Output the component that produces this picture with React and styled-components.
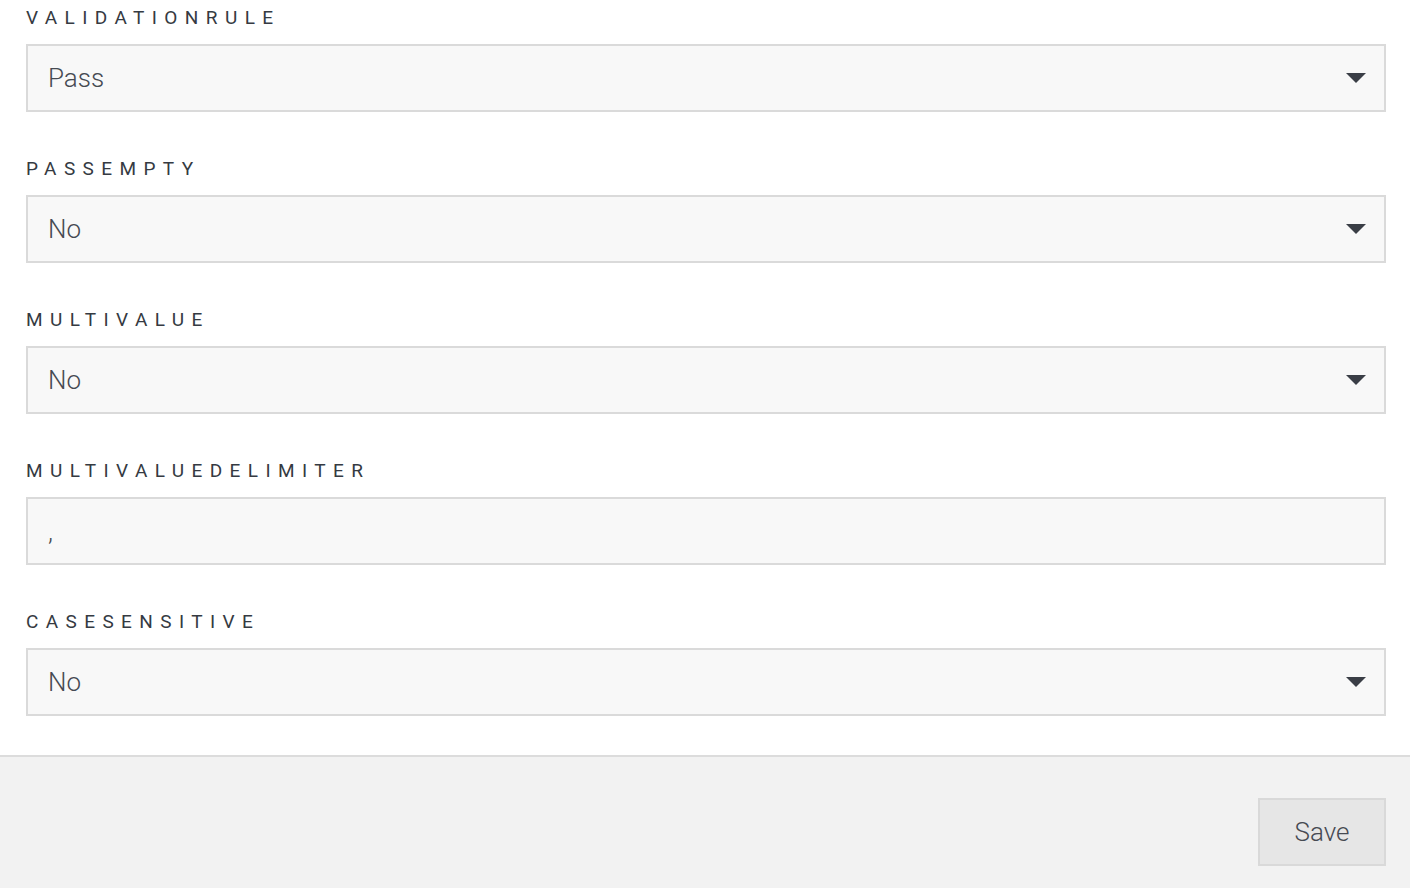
import React from "react";
import styled, { createGlobalStyle } from "styled-components";

const GlobalStyle = createGlobalStyle`
  html, body {
    margin: 0;
    padding: 0;
    background: #ffffff;
  }
  body {
    font-family: Roboto, "Liberation Sans", Arial, sans-serif;
    color: #3d424a;
  }
`;

const fields = [
  { name: "VALIDATIONRULE", value: "Pass", kind: "select" },
  { name: "PASSEMPTY", value: "No", kind: "select" },
  { name: "MULTIVALUE", value: "No", kind: "select" },
  { name: "MULTIVALUEDELIMITER", value: ",", kind: "text" },
  { name: "CASESENSITIVE", value: "No", kind: "select" },
];

const App = () => {
  return (
    <>
      <GlobalStyle />
      <Page>
        <Form>
          {fields.map((f) => (
            <Field key={f.name}>
              <Label>{f.name}</Label>
              <Control>
                <Value>{f.value}</Value>
                {f.kind === "select" && (
                  <Caret viewBox="0 0 20 10" width="20" height="10">
                    <path d="M0 0 L20 0 L10 10 Z" fill="#3a3e46" />
                  </Caret>
                )}
              </Control>
            </Field>
          ))}
        </Form>
        <Footer>
          <SaveButton>Save</SaveButton>
        </Footer>
      </Page>
    </>
  );
};

export default App;

const Page = styled.div`
  width: 100%;
  min-height: 888px;
  display: flex;
  flex-direction: column;
  background: #f2f2f2;
`;

const Form = styled.div`
  background: #ffffff;
  padding: 8px 24px 39px 26px;
  display: flex;
  flex-direction: column;
  gap: 47px;
`;

const Field = styled.div`
  display: flex;
  flex-direction: column;
`;

const Label = styled.div`
  font-size: 19px;
  line-height: 20px;
  height: 20px;
  letter-spacing: 7.4px;
  font-weight: 400;
  color: #353a42;
  margin-bottom: 16px;
`;

const Control = styled.div`
  box-sizing: border-box;
  height: 68px;
  border: 2px solid #dadada;
  background: #f8f8f8;
  display: flex;
  align-items: center;
  justify-content: space-between;
  padding: 0 18px 0 20px;
`;

const Value = styled.span`
  font-size: 26px;
  font-weight: 300;
  color: #464a52;
`;

const Caret = styled.svg`
  display: block;
  flex-shrink: 0;
`;

const Footer = styled.div`
  flex: 1;
  border-top: 2px solid #dcdcdc;
  background: #f2f2f2;
  display: flex;
  justify-content: flex-end;
  align-items: flex-start;
  padding: 41px 24px 0 0;
`;

const SaveButton = styled.button`
  box-sizing: border-box;
  width: 128px;
  height: 68px;
  border: 2px solid #d9d9d9;
  background: #e6e6e6;
  font-family: Roboto, "Liberation Sans", Arial, sans-serif;
  font-size: 26px;
  font-weight: 300;
  color: #464a52;
  cursor: pointer;
`;
